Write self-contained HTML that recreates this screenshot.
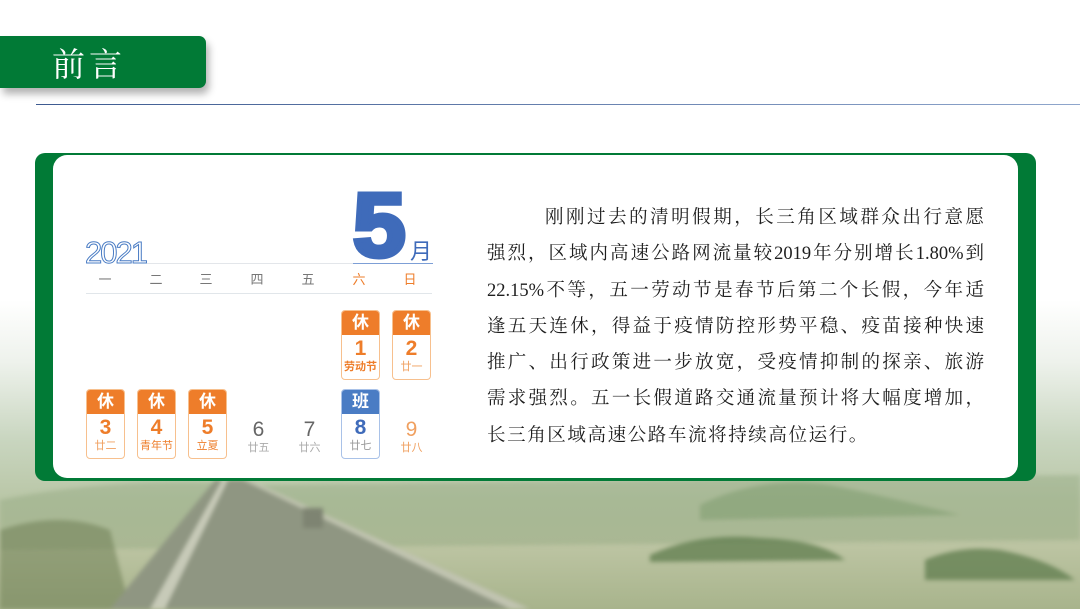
<!DOCTYPE html>
<html><head><meta charset="utf-8"><style>
*{margin:0;padding:0;box-sizing:border-box}
body{width:1080px;height:609px;overflow:hidden;position:relative;background:#fff;font-family:"Liberation Sans","Noto Sans CJK SC",sans-serif}
.bg{position:absolute;left:0;top:300px;width:1080px;height:309px;background:linear-gradient(180deg,#fff 0%,#eef2ec 20%,#c9d6c0 45%,#b9c6a6 65%,#bcc4a2 80%,#a8b48c 100%)}
.title{position:absolute;left:0;top:36px;width:206px;height:52px;background:#017a36;border-radius:0 7px 7px 0;box-shadow:3px 6px 8px rgba(0,0,0,.3);color:#fff;font-family:"Liberation Serif","Noto Serif CJK SC",serif;font-size:33px;line-height:60px;padding-left:52px;letter-spacing:4px}
.hr{position:absolute;left:36px;top:104px;width:1044px;height:1px;background:linear-gradient(90deg,#3d5a90,#8fa6cc)}
.frame{position:absolute;left:35px;top:153px;width:1001px;height:328px;background:#017a36;border-radius:10px}
.card{position:absolute;left:53px;top:155px;width:965px;height:323px;background:#fff;border-radius:14px}
.txt{position:absolute;left:487px;top:203px;font-family:"Liberation Serif","Noto Serif CJK SC",serif;font-size:18.5px;color:#1e1e1e}
.txt div{width:497px;height:36.3px;line-height:30px;text-align:justify;text-align-last:justify;white-space:nowrap}
.abs{position:absolute}
.wd{position:absolute;top:269px;width:40px;text-align:center;font-size:13px;color:#777}
.box{position:absolute;width:39px;height:70px;border:1.5px solid #f7c08e;border-radius:4px;text-align:center;overflow:hidden;background:#fff}
.box .h{height:24px;background:#ee7d2a;color:#fff;font-weight:bold;font-size:17px;line-height:24px}
.box .n{font-size:21px;font-weight:bold;color:#ee7d2a;line-height:22px;margin-top:3px}
.box .s{font-size:11px;color:#f0a060;line-height:15px}
.plain{position:absolute;width:39px;text-align:center}
.plain .n{font-size:21px;color:#666;line-height:22px}
.plain .s{font-size:11px;color:#aaa;line-height:15px}
</style></head><body>
<div class="bg"></div>
<svg class="abs" style="left:0;top:420px;filter:blur(2px)" width="1080" height="189">
<path d="M0 80 Q120 55 260 65 L1080 55 L1080 120 L0 130Z" fill="#8ea67c" opacity=".4"/>
<path d="M700 85 Q760 55 830 65 Q880 75 960 95 L700 100Z" fill="#7c9a6c" opacity=".5"/>
<path d="M650 135 Q700 112 760 118 Q820 120 845 140 L650 142Z" fill="#5f7c4e" opacity=".75"/>
<path d="M925 140 Q960 125 1000 130 Q1050 140 1075 160 L925 160Z" fill="#5f7c4e" opacity=".75"/>
<path d="M0 110 Q60 90 110 110 L130 189 L0 189Z" fill="#6f7f56" opacity=".55"/>
<path d="M215 60 L250 60 L530 189 L110 189Z" fill="#8f9682"/>
<path d="M222 60 L228 60 L165 189 L150 189Z" fill="#d5d7c5" opacity=".8"/>
<path d="M243 60 L250 60 L530 189 L510 189Z" fill="#d5d7c5" opacity=".7"/>
<path d="M303 88 L323 88 L323 108 L303 108Z" fill="#7e8472"/>
</svg>
<div class="title">前言</div>
<div class="hr"></div>
<div class="frame"></div>
<div class="card"></div>

<div class="abs" style="left:85px;top:235px;font-size:31px;color:#fff;-webkit-text-stroke:1px #4a7cc4;letter-spacing:-2px;font-family:'Liberation Sans',sans-serif">2021</div>
<div class="abs" style="left:353px;top:180px;font-size:90px;line-height:92px;font-weight:bold;color:#3f6bba;-webkit-text-stroke:5px #3f6bba;font-family:'Liberation Sans',sans-serif;transform:scaleX(1.05);transform-origin:left top">5</div>
<div class="abs" style="left:410px;top:234px;font-size:22px;color:#3f6bba">月</div>
<div class="abs" style="left:147px;top:263px;width:206px;height:1px;background:#e3e6ea"></div>
<div class="abs" style="left:353px;top:263px;width:80px;height:1px;background:#7d9fd6"></div>
<div class="abs" style="left:86px;top:293px;width:346px;height:1px;background:#e1e6ea"></div>
<div class="wd" style="left:85px">一</div>
<div class="wd" style="left:136px">二</div>
<div class="wd" style="left:186px">三</div>
<div class="wd" style="left:237px">四</div>
<div class="wd" style="left:288px">五</div>
<div class="wd" style="left:339px;color:#ee7d2a">六</div>
<div class="wd" style="left:390px;color:#ee7d2a">日</div>

<div class="box" style="left:341px;top:310px"><div class="h">休</div><div class="n">1</div><div class="s" style="color:#ee7d2a;font-weight:bold">劳动节</div></div>
<div class="box" style="left:392px;top:310px"><div class="h">休</div><div class="n">2</div><div class="s">廿一</div></div>
<div class="box" style="left:86px;top:389px"><div class="h">休</div><div class="n">3</div><div class="s">廿二</div></div>
<div class="box" style="left:137px;top:389px"><div class="h">休</div><div class="n">4</div><div class="s" style="color:#ee7d2a">青年节</div></div>
<div class="box" style="left:188px;top:389px"><div class="h">休</div><div class="n">5</div><div class="s" style="color:#ee7d2a">立夏</div></div>
<div class="plain" style="left:239px;top:419px"><div class="n">6</div><div class="s">廿五</div></div>
<div class="plain" style="left:290px;top:419px"><div class="n">7</div><div class="s">廿六</div></div>
<div class="box" style="left:341px;top:389px;border-color:#a9c2e8"><div class="h" style="background:#4a7cc4">班</div><div class="n" style="color:#3f6bba">8</div><div class="s" style="color:#999">廿七</div></div>
<div class="plain" style="left:392px;top:419px"><div class="n" style="color:#f0a060">9</div><div class="s" style="color:#f0a060">廿八</div></div>

<div class="txt">
<div style="padding-left:58px">刚刚过去的清明假期，长三角区域群众出行意愿</div>
<div>强烈，区域内高速公路网流量较2019年分别增长1.80%到</div>
<div>22.15%不等，五一劳动节是春节后第二个长假，今年适</div>
<div>逢五天连休，得益于疫情防控形势平稳、疫苗接种快速</div>
<div>推广、出行政策进一步放宽，受疫情抑制的探亲、旅游</div>
<div>需求强烈。五一长假道路交通流量预计将大幅度增加，</div>
<div style="text-align-last:left;letter-spacing:1.6px">长三角区域高速公路车流将持续高位运行。</div>
</div>
</body></html>
